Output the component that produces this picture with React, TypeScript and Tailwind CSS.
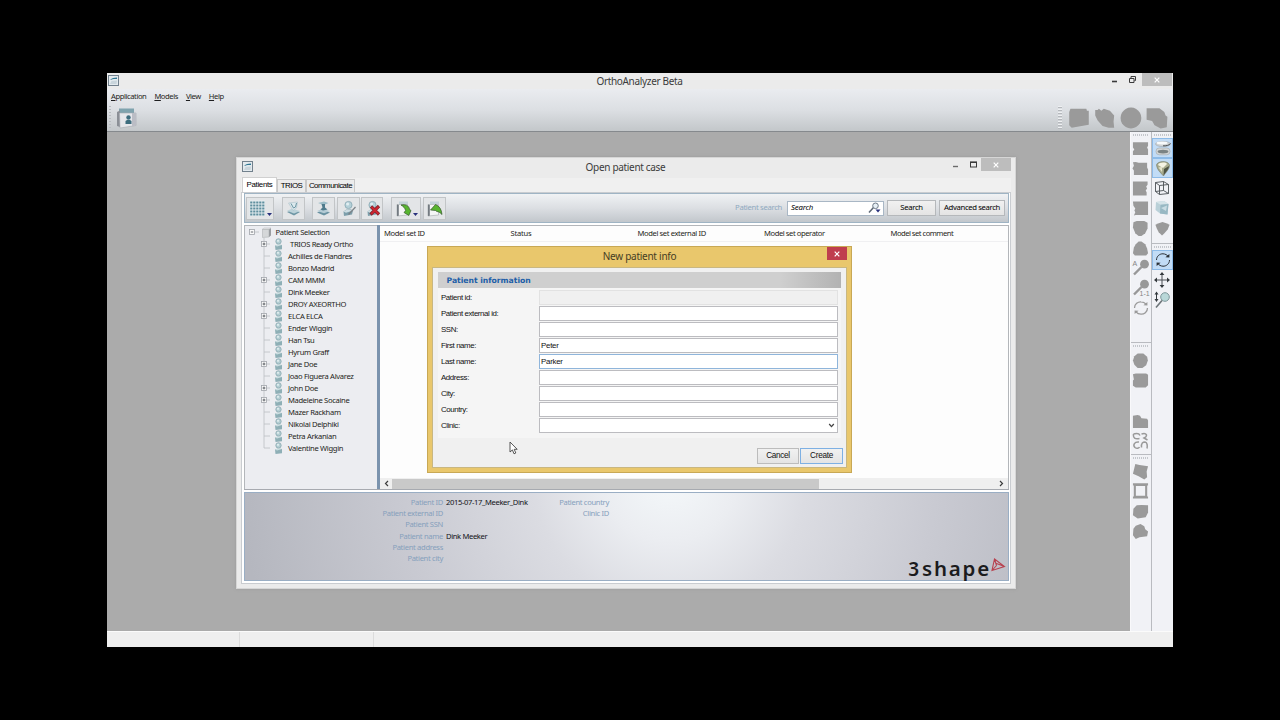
import type { ReactNode } from "react";

const UI = "font-['Noto_Sans',sans-serif]";

function AppIcon() {
  return (
    <svg className="block h-[11px] w-[11px]" viewBox="0 0 11 11">
      <rect x="0.5" y="0.5" width="10" height="10" fill="#e3eaee" stroke="#72818d" />
      <path d="M2 4.8 C4 2.8 6 2.8 9 2.4 L9 4 C6 3.6 4 4.4 2 4.8Z" fill="#2f7591" />
      <path d="M2 9 L3.5 6 L9 5.5 L8.5 9Z" fill="#c9d5dc" />
    </svg>
  );
}

function Shape({ d, w = 17, h = 17 }: { d: string; w?: number; h?: number }) {
  return (
    <svg width={w} height={h} viewBox="0 0 18 18" className="block">
      <path d={d} fill="#9a9a9a" />
    </svg>
  );
}

function Dots() {
  return <div className="mx-[2px] h-[2px] shrink-0 bg-[repeating-linear-gradient(90deg,#c4c7cc_0_1px,transparent_1px_2px)]" />;
}

function Separator() {
  return (
    <div className="h-[6px] shrink-0">
      <div className="mb-[2px] h-px bg-[#b9bbc0]" />
      <Dots />
    </div>
  );
}

function Cell({ children, on = false }: { children?: ReactNode; on?: boolean }) {
  return (
    <div
      className={
        on
          ? "flex h-5 shrink-0 items-center justify-center border border-[#8dbbe8] bg-[#c2dcf6]"
          : "flex h-5 shrink-0 items-center justify-center pr-px"
      }
    >
      {children}
    </div>
  );
}

function Rotate({ color, thin }: { color: string; thin?: boolean }) {
  return (
    <svg width="16" height="16" viewBox="0 0 16 16" className="block" fill="none" stroke={color} strokeWidth={thin ? 1 : 1.3}>
      <path d="M1.5 8 C1.5 4 5 1.6 8 1.8 C10.4 1.9 12 3 13 4.2" />
      <path d="M14.5 8 C14.5 12 11 14.4 8 14.2 C5.6 14.1 4 13 3 11.8" />
      <path d="M14.4 2 V5.6 L10.4 5.2Z M1.6 14 V10.4 L5.6 10.8Z" fill={color} stroke="none" />
    </svg>
  );
}

function Loupe({ label, low }: { label: string; low?: boolean }) {
  return (
    <svg width="18" height="18" viewBox="0 0 18 18" className="block">
      <circle cx="12.5" cy="5.2" r="4.4" fill="#989898" />
      <path d="M9.5 8 L2 15.5" stroke="#989898" strokeWidth="2.4" />
      <text x={low ? 7.5 : 0.5} y={low ? 17 : 7} fontSize="7" fill="#858585" fontFamily="Liberation Sans">
        {label}
      </text>
    </svg>
  );
}

const leftShapes = [
  "M1 2.5 H17 V6 L16 8 L17 10 V16 H1 V12 L2.5 10 L1 8Z",
  "M1 2.5 L4 2 L7 3 H16 V8 L17 10 V16 H2 V11 L0.5 9 L2 6Z",
  "M1 1.5 H16.5 V5 L15 7 L16 9 L14.5 11 L15.5 13 V16.5 H1Z",
  "M1 1.5 H17 V16 H4 L2 16.5 L3.5 13 L2.5 11 L3.5 9 L1.5 6Z",
  "M1.5 2.5 L5 1 H13 L16.5 3 L16.5 9 L14 14 L10 17 H7 L3.5 14 L1 8Z",
  "M7 1.5 H10 L14 4.5 L16 9 L17 14 L15 16.5 H3 L1 14 L2 8 L4 4.5Z",
];

function SideBars() {
  return (
    <div className="flex w-[43px] shrink-0 border-l border-[#f9f9fb] bg-[#f1f2f6]">
      <div className="flex w-[21px] flex-col border-r border-[#b9bbc0] pt-[2px]">
        <Dots />
        <div className="h-[2px] shrink-0" />
        {leftShapes.map((d) => (
          <Cell key={d}>
            <Shape d={d} />
          </Cell>
        ))}
        <Cell>
          <Loupe label="A" />
        </Cell>
        <Cell>
          <Loupe label="1-1" low />
        </Cell>
        <Cell>
          <Rotate color="#9a9a9a" />
        </Cell>
        <div className="h-6 shrink-0" />
        <Separator />
        <div className="h-[2px] shrink-0" />
        <Cell>
          <Shape d="M6 1.5 H12 L16 5 L16.8 9 L15 14 L11 17 H6 L2.5 13.5 L1 9 L2.5 4.5Z" />
        </Cell>
        <Cell>
          <Shape d="M1 2.5 L4 1.5 H15 L17 3 V14 L14.5 16.5 H4 L1 14.5 V9 L2 8Z" />
        </Cell>
        <div className="h-[21px] shrink-0" />
        <Cell>
          <Shape d="M1 3 L6 2 L8.5 3 L10 5.5 L16 6 L17 8 V16 H1Z" />
        </Cell>
        <Cell>
          <svg width="17" height="18" viewBox="0 0 17 18" className="block" fill="none" stroke="#9a9a9a" strokeWidth="1.5">
            <path d="M1.5 2 C1 6 3 7.5 7.5 6.5 M8 3.5 C7 1 3.5 1.5 1.5 2 M9.5 2 C15 0.5 16 4 12 6 L15.5 8" />
            <path d="M7 10 C2.5 9.5 0.5 13 3 15.5 C5 17 7 16 7.5 15 M9.5 15.5 C9 11 11 10 13 10 C15.5 10.5 15.5 14 15 16.5" />
          </svg>
        </Cell>
        <div className="h-[3px] shrink-0" />
        <Separator />
        <div className="h-px shrink-0" />
        <Cell>
          <Shape d="M3.5 1 L8 2 L17 3.5 L15.5 9 L16 15 L13 17.5 L7 14 L1 11.5Z" />
        </Cell>
        <Cell>
          <svg width="17" height="18" viewBox="0 0 18 18" className="block">
            <path d="M3 2.5 H15 V15 H3Z M1 2 H17 M1 15.8 H17" fill="none" stroke="#9a9a9a" strokeWidth="2.2" />
          </svg>
        </Cell>
        <Cell>
          <Shape d="M5 2.5 L10 2 L17 2.5 V10 L14.5 15 L6 16.5 L1 13 L1.5 6Z" />
        </Cell>
        <Cell>
          <Shape d="M4 3 L9 1 L13 3.5 L14 6.5 L17 9 L16 14 L8 15 L4 17 L1 13 L1.5 6Z" />
        </Cell>
      </div>
      <div className="flex w-[21px] flex-col pt-[2px]">
        <Dots />
        <div className="h-[2px] shrink-0" />
        <Cell on>
          <svg width="18" height="18" viewBox="0 0 18 18" className="block">
            <ellipse cx="9" cy="5" rx="7.5" ry="2.6" fill="#cfd3d5" stroke="#a0a5a9" strokeWidth="0.6" />
            <ellipse cx="8" cy="4" rx="5.5" ry="1.4" fill="#f8fafb" />
            <path d="M9 6.8 C12 7 15 6.5 16.5 4.5" fill="none" stroke="#4b5053" strokeWidth="1" />
            <rect x="2" y="9" width="14" height="6.8" rx="3.2" fill="#d3d6d7" stroke="#a3a7a9" strokeWidth="0.6" />
            <ellipse cx="9" cy="12.6" rx="5.4" ry="1.9" fill="#7b8384" />
          </svg>
        </Cell>
        <Cell on>
          <svg width="18" height="18" viewBox="0 0 18 18" className="block">
            <path d="M2.5 6 C3 2 14 1 15.5 6 C16 10 11 14 9.5 17 C7 14 3 11 2.5 6Z" fill="#a8ac8e" stroke="#747864" strokeWidth="0.6" />
            <path d="M4 6 C5 3 12 3 13 5 L9 9Z" fill="#f5f4e4" />
            <path d="M10 10 L15 7 C15 10 12 13 9.5 16.5Z" fill="#4d5344" />
            <path d="M4.5 8.5 L8 8 L8 13Z" fill="#e5e4cc" />
          </svg>
        </Cell>
        <Cell>
          <svg width="18" height="18" viewBox="0 0 18 18" className="block" fill="none" stroke="#4a4f54" strokeWidth="0.9">
            <path d="M2.5 3.5 L10.5 2.5 V11.5 L2.5 12.5Z M6.5 6.5 L15.5 5.5 V14.5 L6.5 15.5Z M2.5 3.5 L6.5 6.5 M10.5 2.5 L15.5 5.5 M2.5 12.5 L6.5 15.5 M10.5 11.5 L15.5 14.5" />
          </svg>
        </Cell>
        <Cell>
          <svg width="18" height="18" viewBox="0 0 18 18" className="block">
            <path d="M3 3 L11 2 L15.5 5 L14.5 15.5 L7 14.5 L2.5 11Z" fill="#b9d0d8" />
            <path d="M3 3 L11 2 L15.5 5 L7.5 5.8Z" fill="#d5e3e8" />
            <path d="M7.5 5.8 L15.5 5 L14.5 15.5 L7 14.5Z" fill="#98b8c3" />
            <path d="M8 9 L14 6.5 L13 12Z" fill="#c9dce3" />
          </svg>
        </Cell>
        <Cell>
          <Shape d="M1.5 5 L5 3.5 L9 2 L13 3.5 L16.5 5 L14.5 10 L11 14 L8.5 16.5 L5 13 L3 9Z" />
        </Cell>
        <div className="h-[5px] shrink-0" />
        <Separator />
        <div className="h-px shrink-0" />
        <Cell on>
          <Rotate color="#2b3036" thin />
        </Cell>
        <Cell>
          <svg width="18" height="18" viewBox="0 0 18 18" className="block">
            <path d="M9 3 V15 M3 9 H15" stroke="#4a4f54" />
            <path d="M9 1 L11.4 4 H6.6Z M9 17 L11.4 14 H6.6Z M1 9 L4 6.6 V11.4Z M17 9 L14 6.6 V11.4Z" fill="#33383c" />
          </svg>
        </Cell>
        <Cell>
          <svg width="18" height="18" viewBox="0 0 18 18" className="block">
            <path d="M3.5 3 V9" stroke="#33383c" />
            <path d="M3.5 0.5 L5.5 3.5 H1.5Z M3.5 11 L5.5 8 H1.5Z" fill="#33383c" />
            <path d="M9 9.5 L3 16.5" stroke="#6c7478" strokeWidth="1.6" />
            <circle cx="12" cy="6" r="4.3" fill="#b9d8d9" stroke="#7f979b" strokeWidth="1" />
          </svg>
        </Cell>
      </div>
    </div>
  );
}

function ToolButton({ children, menu = false, className }: { children: ReactNode; menu?: boolean; className: string }) {
  return (
    <div className={`flex h-[23px] shrink-0 items-center border border-[#c2c5c7] bg-[#e3e5e7] pl-[2px] ${className}`}>
      {children}
      {menu && (
        <svg width="5" height="3" viewBox="0 0 5 3" className="mt-[13px] ml-px block">
          <path d="M0 0 H5 L2.5 3Z" fill="#28307c" />
        </svg>
      )}
    </div>
  );
}

function Person() {
  return (
    <g>
      <path d="M3.5 11.5 L6.5 9.5 H11 L13 10.5 L12 14.5 L4 16Z" fill="#7d9fab" />
      <path d="M3.5 11.5 L7 9.6 L13 10.4 L6 12.8Z" fill="#cfdee3" />
      <circle cx="8.5" cy="5" r="3.6" fill="#b4d0d8" stroke="#7fa0ac" strokeWidth="0.7" />
      <circle cx="7.6" cy="4" r="1.5" fill="#e1eef1" />
    </g>
  );
}

function ExportIcon({ back = false }: { back?: boolean }) {
  return (
    <svg width="17" height="17" viewBox="0 0 17 17" className="block">
      <path d="M4 1.5 H13 V4 H4Z" fill="#c3d2d8" />
      <path d="M2 4.5 H12.5 V15 L2 16Z" fill="#f4f5f5" stroke="#a3a8ab" strokeWidth="0.6" />
      <path d="M2 4.5 L3.8 5 V15.8 L2 16Z" fill="#737a80" />
      {back ? (
        <path d="M4.5 10 L9.5 4.5 C13.5 6 15.5 9.5 16 14.5 C14 12.5 12.5 11.5 10.8 11.5 L9.5 10.5Z" fill="#58b530" stroke="#33542b" strokeWidth="0.7" />
      ) : (
        <path d="M6 5 C10.5 4 14 5.5 14.6 9.5 L16 10.5 L13.8 15.5 L9 12.5 L10.6 10.6 C10 8 8.5 6.5 6 5Z" fill="#58b530" stroke="#33542b" strokeWidth="0.7" />
      )}
    </svg>
  );
}

function PushButton({ children, className }: { children: ReactNode; className: string }) {
  return (
    <div className={`flex h-4 items-center justify-center border bg-linear-to-b from-[#f1f1f1] to-[#e4e4e4] whitespace-nowrap ${className}`}>
      {children}
    </div>
  );
}

function Toolbar() {
  return (
    <div className="flex h-[30px] shrink-0 items-center border border-[#9fb4c4] bg-linear-to-b from-[#f0f2f4] via-[#dcdfe3] to-[#c2c7cc] pr-[3px] pl-px">
      <ToolButton className="mr-[8px] w-[28px]" menu>
        <svg width="17" height="17" viewBox="0 0 17 17" className="block">
          <rect x="0.5" y="0.5" width="15.5" height="15.5" fill="#e6eef1" />
          <path d="M1.2 2.5 H15.5 M1.2 5.5 H15.5 M1.2 8.5 H15.5 M1.2 11.5 H15.5 M1.2 14.5 H15.5" stroke="#5f8e9e" strokeWidth="2.2" strokeDasharray="2.2 0.8" />
        </svg>
      </ToolButton>
      <ToolButton className="mr-[7px] w-[23px]">
        <svg width="17" height="17" viewBox="0 0 17 17" className="block">
          <path d="M2 12 L7 10 L15 12 L9 15.5Z" fill="#6f97a5" />
          <path d="M2 10.8 L7 8.8 L15 11 L9 13.5Z" fill="#bcd2d9" />
          <path d="M3.5 3 L12.5 2 L11.5 8 L8 10.5Z" fill="#dce9ed" stroke="#a2bbc4" strokeWidth="0.5" />
          <path d="M6 3.5 L8.5 8 L10.5 7 L11.5 3" fill="none" stroke="#5e8b9a" strokeWidth="0.9" />
        </svg>
      </ToolButton>
      <ToolButton className="mr-[2px] w-[23px]">
        <svg width="17" height="17" viewBox="0 0 17 17" className="block">
          <path d="M2 12.5 L7 10.5 L15 12.5 L9 15.5Z" fill="#6a92a1" />
          <path d="M2 11 L7 9 L15 11 L9 13.3Z" fill="#b5ccd5" />
          <path d="M3 3 L9 1.5 L13.5 3 L9 5Z" fill="#9bbcc7" />
          <path d="M6.5 4 H10 L10 7.5 L12.5 9.5 L8 10.5 L5.5 9.5 L7.5 7.5Z" fill="#4f7b8c" />
        </svg>
      </ToolButton>
      <ToolButton className="mr-px w-[23px]">
        <svg width="17" height="17" viewBox="0 0 17 17" className="block">
          <Person />
          <path d="M8.5 14.5 L15.5 7" stroke="#7c8387" strokeWidth="1.2" />
        </svg>
      </ToolButton>
      <ToolButton className="mr-[8px] w-[22px]">
        <svg width="17" height="17" viewBox="0 0 17 17" className="block">
          <Person />
          <path d="M7 6.5 L15 14.5 M15 6 L6.5 14.5" stroke="#7e222a" strokeWidth="3.2" />
          <path d="M7.5 7 L14.6 14 M14.6 6.6 L7.2 14" stroke="#cd2530" strokeWidth="2" />
        </svg>
      </ToolButton>
      <ToolButton className="mr-[2px] w-[30px] pl-[3px]" menu>
        <ExportIcon />
      </ToolButton>
      <ToolButton className="w-[23px]">
        <ExportIcon back />
      </ToolButton>
      <div className="grow" />
      <span className="mr-[5px] text-[7.7px] tracking-[-0.32px] text-[#8fa9c0]">Patient search</span>
      <div className="mr-[3px] flex h-[15px] w-[97px] items-center justify-between border border-[#a9b7c5] bg-white pr-[2px] pl-[3px]">
        <span className="text-[7.8px] tracking-[-0.2px] text-black italic">Search</span>
        <svg width="13" height="12" viewBox="0 0 13 12" className="block">
          <path d="M1 10.5 L5.5 5.5" stroke="#5b6674" strokeWidth="1.5" />
          <circle cx="7.5" cy="3.8" r="2.8" fill="#e6eff5" stroke="#6d7987" />
          <path d="M7.5 7.5 H12.5 L10 10.5Z" fill="#28307c" />
        </svg>
      </div>
      <PushButton className="mr-[3px] w-[49px] border-[#b5b8bb] text-[7.7px] tracking-[-0.3px] text-black">Search</PushButton>
      <PushButton className="w-[66px] border-[#b5b8bb] text-[7.7px] tracking-[-0.34px] text-black">Advanced search</PushButton>
    </div>
  );
}

const patients: { name: string; more?: boolean; indent?: boolean }[] = [
  { name: "TRIOS Ready Ortho", more: true, indent: true },
  { name: "Achilles de Flandres" },
  { name: "Bonzo Madrid" },
  { name: "CAM MMM", more: true },
  { name: "Dink Meeker" },
  { name: "DROY AXEORTHO", more: true },
  { name: "ELCA ELCA", more: true },
  { name: "Ender Wiggin" },
  { name: "Han Tsu" },
  { name: "Hyrum Graff" },
  { name: "Jane Doe", more: true },
  { name: "Joao Figuera Alvarez" },
  { name: "John Doe", more: true },
  { name: "Madeleine Socaine", more: true },
  { name: "Mazer Rackham" },
  { name: "Nikolai Delphiki" },
  { name: "Petra Arkanian" },
  { name: "Valentine Wiggin" },
];

function Expander({ open = false }: { open?: boolean }) {
  return (
    <g>
      <rect x="0.5" y="3.5" width="5" height="5" fill="#fafafa" stroke="#a0a4aa" strokeWidth="0.8" />
      <path d={open ? "M1.8 6 H4.2" : "M1.6 6 H4.4 M3 4.6 V7.4"} stroke="#42484e" strokeWidth="0.8" />
    </g>
  );
}

function Tree() {
  return (
    <div className="flex w-[133px] shrink-0 flex-col border-t border-l border-[#b3b6ba] bg-[#ecedf1] text-[7.6px] leading-[12px] tracking-[-0.32px] text-[#1e1e20]">
      <div className="flex h-3 items-center pl-[4px] whitespace-nowrap">
        <svg width="23" height="12" viewBox="0 0 23 12" className="mr-[3.5px] block">
          <Expander open />
          <path d="M6 6 H10" stroke="#bcbfc4" strokeWidth="0.8" />
          <path d="M13 3.5 L15 2 H22 L20 3.5Z" fill="#e4e5e6" stroke="#b4b7ba" strokeWidth="0.5" />
          <path d="M13.5 3.5 H20 V11 L13.5 11.5Z" fill="#d5d7d9" stroke="#b0b3b6" strokeWidth="0.6" />
          <path d="M20 3.5 L22 2.2 V9.5 L20 11Z" fill="#9a9da1" />
        </svg>
        Patient Selection
      </div>
      {patients.map((p, i) => (
        <div key={p.name} className="flex h-3 items-center pl-[16px] whitespace-nowrap">
          <svg width="24" height="12" viewBox="0 0 24 12" className="mr-[3px] block shrink-0">
            <path d={i === patients.length - 1 ? "M3 0 V6 H9" : "M3 0 V12 M3 6 H9"} fill="none" stroke="#bcbfc4" strokeWidth="0.8" />
            {p.more && <Expander />}
            <circle cx="17.5" cy="3.4" r="2.7" fill="#b4ced3" stroke="#82a2aa" strokeWidth="0.7" />
            <circle cx="17" cy="2.8" r="1.1" fill="#e0edef" />
            <path d="M14 7.5 L17 6.4 L21 7 V11.2 L14.5 12Z" fill="#8eafb6" />
            <path d="M14 7.5 L17 6.4 L21 7 L16 8.6Z" fill="#cbdde0" />
          </svg>
          <span className={p.indent ? "pl-[2px]" : ""}>{p.name}</span>
        </div>
      ))}
    </div>
  );
}

function ModelList() {
  return (
    <div className="flex grow flex-col border-t border-r border-[#b3b6ba] bg-[#fdfdfd]">
      <div className="flex h-4 shrink-0 items-center border-b border-[#f0f0f2] pt-px pl-[4px] text-[7.6px] tracking-[-0.42px] whitespace-nowrap text-[#1e1e20]">
        <span className="w-[126.5px] tracking-[-0.36px]">Model set ID</span>
        <span className="w-[127px] tracking-[-0.2px]">Status</span>
        <span className="w-[126.5px] tracking-[-0.38px]">Model set external ID</span>
        <span className="w-[126.5px]">Model set operator</span>
        <span className="tracking-[-0.5px]">Model set comment</span>
      </div>
      <div className="grow" />
      <div className="flex h-[11px] shrink-0 items-center bg-[#efefef] pl-[4px]">
        <svg width="5" height="7" viewBox="0 0 5 7" className="mr-[3px] block">
          <path d="M4 1 L1.5 3.5 L4 6" fill="none" stroke="#3c3c3c" strokeWidth="1.2" />
        </svg>
        <div className="h-[10px] w-[427px] bg-[#c9c9c9]" />
        <div className="grow" />
        <svg width="5" height="7" viewBox="0 0 5 7" className="mr-[4px] block">
          <path d="M1 1 L3.5 3.5 L1 6" fill="none" stroke="#3c3c3c" strokeWidth="1.2" />
        </svg>
      </div>
    </div>
  );
}

const details = [
  ["Patient ID", "2015-07-17_Meeker_Dink"],
  ["Patient external ID", ""],
  ["Patient SSN", ""],
  ["Patient name", "Dink Meeker"],
  ["Patient address", ""],
  ["Patient city", ""],
];

function PatientPanel() {
  return (
    <div className="relative mt-[2px] flex h-[89px] shrink-0 border border-[#9aaec4] bg-[radial-gradient(circle_430px_at_425px_-20px,#f5f9fb_0%,#ebedf1_16%,#dbdce2_32%,#c9cad2_62%,#b5b7bf_100%)] pt-[4px] text-[7.6px] leading-[11.2px] tracking-[-0.32px] whitespace-nowrap text-[#86a0bc]">
      <div className="w-[198px] text-right">
        {details.map(([label]) => (
          <div key={label}>{label}</div>
        ))}
      </div>
      <div className="w-[103px] pl-[3px] text-[#111318]">
        {details.map(([label, value]) => (
          <div key={label} className="h-[11.2px] tracking-[-0.36px]">
            {value}
          </div>
        ))}
      </div>
      <div className="w-[63px] text-right">
        <div>Patient country</div>
        <div>Clinic ID</div>
      </div>
      <div className="absolute right-[2px] -bottom-[2px] flex items-baseline text-[20.5px] leading-[26px] font-semibold tracking-[1.8px] text-[#1b1b1d]">
        <span className="mr-[1px] text-[19px]">3</span>
        <span>shape</span>
        <svg width="15" height="15" viewBox="0 0 15 15" className="mt-[3px] block self-start">
          <path d="M3.5 1 L13.5 8.5 L1 12.5Z M3.5 1 L5.5 7.5 M13.5 8.5 L5.5 5.5 M5.5 7.5 L1 12.5" fill="none" stroke="#b8414f" strokeWidth="1.1" />
        </svg>
      </div>
    </div>
  );
}

function CaseWindow() {
  return (
    <div className="absolute top-[25px] left-[129px] flex h-[432px] w-[780px] flex-col border border-[#d6d6d6] bg-[#ebebeb] shadow-[0_0_3px_#9a9a9a]">
      <div className="flex h-[20px] shrink-0">
        <div className="w-[61px] pt-[3px] pl-[5px]">
          <AppIcon />
        </div>
        <div className="grow text-center text-[10px] leading-[18px] tracking-[-0.32px] text-[#3b3b3b]">Open patient case</div>
        <div className="flex w-[62px]">
          <svg width="28" height="13" viewBox="0 0 28 13" className="block">
            <path d="M0 8.5 H5" stroke="#6b6b6b" strokeWidth="1.4" />
            <rect x="17.5" y="4.5" width="6" height="4.5" fill="none" stroke="#3a3a3a" />
            <path d="M17 4.2 H24" stroke="#3a3a3a" strokeWidth="1.6" />
          </svg>
          <div className="flex h-[13px] w-[30px] items-center justify-center bg-[#bdbdbd]">
            <svg width="6" height="6" viewBox="0 0 6 6" className="block">
              <path d="M0.7 0.7 L5.3 5.3 M5.3 0.7 L0.7 5.3" stroke="#fff" strokeWidth="1.2" />
            </svg>
          </div>
        </div>
      </div>
      <div className="mr-[4px] ml-[4px] flex grow flex-col bg-[#f0f0f0]">
        <div className="flex h-[14px] shrink-0 items-end pl-px text-[7.9px] tracking-[-0.34px] whitespace-nowrap text-black font-['Liberation_Sans',sans-serif]">
          <div className="flex h-[15px] w-[35px] items-center justify-center border border-b-0 border-[#d0d0d0] bg-white">Patients</div>
          <div className="flex h-[13px] w-[29px] items-center justify-center border border-b-0 border-[#c8c8c8] bg-[#ececec] tracking-[-0.5px]">TRIOS</div>
          <div className="flex h-[13px] w-[49px] items-center justify-center border border-b-0 border-[#c8c8c8] bg-[#ececec] tracking-[-0.5px]">Communicate</div>
        </div>
        <div className="flex grow flex-col border border-[#c9ccd0] bg-white pr-px pb-[2px] pl-[2px]">
          <Toolbar />
          <div className="mt-[2px] flex grow border-b border-[#a7aab0]">
            <Tree />
            <div className="w-[3px] shrink-0 bg-[#7b93ae]" />
            <ModelList />
          </div>
          <PatientPanel />
        </div>
      </div>
      <div className="h-[4px] shrink-0" />
    </div>
  );
}

const fields: { label: string; value?: string; kind?: "off" | "focus" | "select" }[] = [
  { label: "Patient id:", kind: "off" },
  { label: "Patient external id:" },
  { label: "SSN:" },
  { label: "First name:", value: "Peter" },
  { label: "Last name:", value: "Parker", kind: "focus" },
  { label: "Address:" },
  { label: "City:" },
  { label: "Country:" },
  { label: "Clinic:", kind: "select" },
];

function fieldClass(kind?: string) {
  if (kind === "off") return "border-[#e2e2e2] bg-[#f0f0f0]";
  if (kind === "focus") return "border-[#8fb5db] bg-white";
  return "border-[#bcbcc0] bg-white";
}

function PatientDialog() {
  return (
    <div className="absolute top-[114px] left-[320px] flex h-[227px] w-[425px] flex-col border border-[#c8a855] bg-[#e9c76c] pr-[4px] pb-[4px] pl-[4px] font-['Liberation_Sans',sans-serif]">
      <div className="flex h-[20px] shrink-0">
        <div className="w-[20px]" />
        <div className={`grow text-center text-[10px] leading-[18px] tracking-[-0.26px] text-[#463d24] ${UI}`}>New patient info</div>
        <div className="flex h-[13px] w-[20px] items-center justify-center bg-[#bf3e4e]">
          <svg width="6" height="6" viewBox="0 0 6 6" className="block">
            <path d="M0.7 0.7 L5.3 5.3 M5.3 0.7 L0.7 5.3" stroke="#fff" strokeWidth="1.2" />
          </svg>
        </div>
      </div>
      <div className="flex grow flex-col border border-[#c9b781] bg-[#f0f0f0] px-[5px] pt-[4px]">
        <div className="flex h-4 shrink-0 items-center bg-linear-to-r from-[#cfcfcf] from-85% to-[#b2b2b2] pt-px pl-[8.5px] text-[7.7px] font-bold tracking-[-0.03px] text-[#1d5ea8] font-['DejaVu_Sans',sans-serif]">
          Patient information
        </div>
        <div className="flex h-[150px] shrink-0 flex-col bg-[#f5f5f5] pt-[2px] text-[7.9px] tracking-[-0.4px] text-[#111]">
          {fields.map((f) => (
            <div key={f.label} className="flex h-4 items-start pl-[3px]">
              <span className="w-[98px] leading-[16px]">{f.label}</span>
              <div className={`flex h-[15px] w-[299px] items-center justify-between border px-px pr-[2px] leading-[12px] tracking-[-0.25px] ${fieldClass(f.kind)}`}>
                <span>{f.value}</span>
                {f.kind === "select" && (
                  <svg width="7" height="5" viewBox="0 0 7 5" className="block">
                    <path d="M1.2 1 L3.5 3.6 L5.8 1" fill="none" stroke="#444" strokeWidth="1.3" />
                  </svg>
                )}
              </div>
            </div>
          ))}
        </div>
        <div className="-mr-[2px] flex justify-end gap-px pt-[10px] text-[8.2px] tracking-[-0.3px] text-[#111]">
          <PushButton className="w-[42px] border-[#bcbcbc]">Cancel</PushButton>
          <PushButton className="w-[43px] border-[#7eb0e3]">Create</PushButton>
        </div>
      </div>
    </div>
  );
}

export default function App() {
  return (
    <div className={`h-[720px] w-[1280px] overflow-hidden bg-black pt-[73px] pl-[107px] ${UI}`}>
      <div className="flex h-[574px] w-[1066px] flex-col bg-[#ebebeb]">
        <div className="flex h-4 shrink-0">
          <div className="w-[60px] pt-[2px] pl-px">
            <AppIcon />
          </div>
          <div className="grow text-center text-[10px] leading-[16px] tracking-[-0.33px] text-[#3b3b3b]">OrthoAnalyzer Beta</div>
          <div className="flex w-[61px]">
            <svg width="30" height="13" viewBox="0 0 30 13" className="block">
              <path d="M0 8.5 H5" stroke="#3a3a3a" strokeWidth="1.6" />
              <path d="M17.5 5.5 H22 V9.5 H17.5Z M19 5 V3.5 H23.5 V7.5 H22.5" fill="none" stroke="#3a3a3a" />
            </svg>
            <div className="flex h-[13px] w-[30px] items-center justify-center bg-[#bdbdbd]">
              <svg width="6" height="6" viewBox="0 0 6 6" className="block">
                <path d="M0.7 0.7 L5.3 5.3 M5.3 0.7 L0.7 5.3" stroke="#fff" strokeWidth="1.2" />
              </svg>
            </div>
          </div>
        </div>
        <div className="flex h-[43px] shrink-0 flex-col border-b border-[#85898d] bg-linear-to-b from-[#eaecf0] via-[#dcdfe3] to-[#c3c7ca]">
          <div className="flex h-4 items-center gap-[8px] pl-[4px] text-[7.6px] tracking-[-0.42px] text-[#1e1e20]">
            {["Application", "Models", "View", "Help"].map((m) => (
              <span key={m}>
                <span className="underline">{m[0]}</span>
                {m.slice(1)}
              </span>
            ))}
          </div>
          <div className="flex h-[26px] items-center">
            <div className="ml-[2px] h-[24px] w-[2px] bg-[repeating-linear-gradient(180deg,#b8bbc0_0_1px,transparent_1px_3px)]" />
            <svg width="20" height="22" viewBox="0 0 20 22" className="ml-[6px] block">
              <path d="M2 1.5 H17 V6 H2Z" fill="#7fa3ae" />
              <path d="M0 5 L3 3.5 V20 L0 19Z" fill="#8b8f96" />
              <path d="M2.5 6 H19 V18.5 L3 21Z" fill="#e6e7eb" stroke="#a5a8ae" strokeWidth="0.6" />
              <path d="M15 6 H19 V18.5 L15 19.2Z" fill="#bbbdc5" />
              <circle cx="11.5" cy="10.5" r="2.2" fill="#3d6d7e" />
              <path d="M8.5 17 V14 L10 13 H13 L14.5 14 V17Z" fill="#3d6d7e" />
            </svg>
            <div className="grow" />
            <div className="mr-[6px] h-[24px] w-[4px] bg-[repeating-linear-gradient(180deg,#eef0f2_0_1px,#b5b8bc_1px_2px,transparent_2px_3px)]" />
            <div className="flex gap-[4px] pr-[5px]">
              <Shape w={22} h={22} d="M2 1.5 H15 L15.5 3 H17 V14.5 L3 17 L1 15 V4Z" />
              <Shape w={22} h={22} d="M1 2.5 L3 2.5 L4 1.5 L6 3 L8 1.5 L13 3 L16.5 7 L16 12 L16.5 17 H12 L7 15.5 L3 11 L1 7Z" />
              <Shape w={22} h={22} d="M9 0.5 A8.5 8.5 0 1 1 8.9 0.5Z" />
              <Shape w={22} h={22} d="M0.5 1 L11 1 L15 4 L16 7 L17.5 8 L17 16.5 L12 17.5 L7 15 L5 11.5 L0.5 10.5Z" />
            </div>
          </div>
        </div>
        <div className="flex grow">
          <div className="relative grow bg-[#ababab]">
            <CaseWindow />
            <PatientDialog />
            <svg width="9" height="14" viewBox="0 0 9 14" className="absolute top-[309px] left-[402px] block">
              <path d="M1 1 V11 L3.4 8.9 L5 12.8 L6.8 12 L5.2 8.3 H8.2Z" fill="#fff" stroke="#444" strokeWidth="0.9" />
            </svg>
          </div>
          <SideBars />
        </div>
        <div className="flex h-[16px] shrink-0 border-t border-[#fbfbfb] bg-[#efefef]">
          <div className="w-[133px] border-r border-[#dcdcdc]" />
          <div className="w-[134px] border-r border-[#dcdcdc]" />
        </div>
      </div>
    </div>
  );
}
